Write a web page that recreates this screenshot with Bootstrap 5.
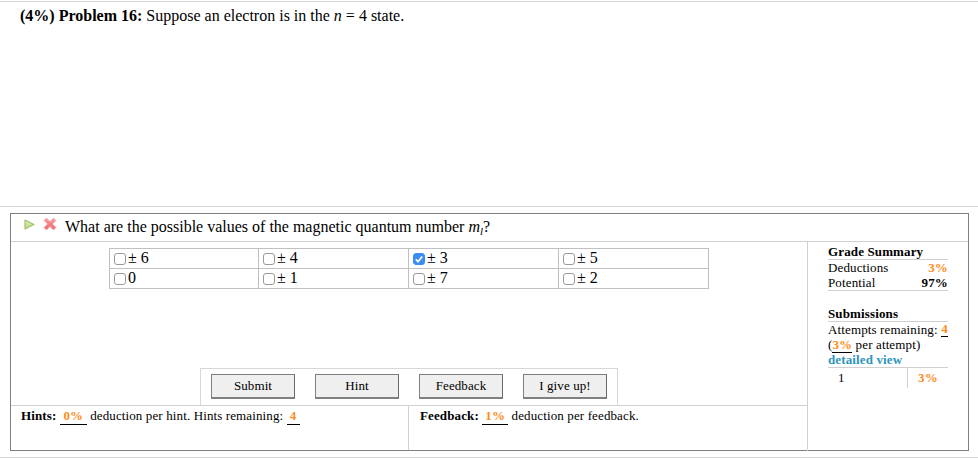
<!DOCTYPE html>
<html lang="en">
<head>
<meta charset="utf-8">
<title>Problem 16</title>
<link href="https://cdn.jsdelivr.net/npm/bootstrap@5.3.0/dist/css/bootstrap.min.css" rel="stylesheet">
<style>
html,body{height:459px;overflow:hidden;}
body{font-family:"Liberation Serif","Times New Roman",serif;color:#000;background:#fff;font-size:13px;line-height:15px;}
.rule{height:1px;background:#d8d8d8;}
.rule-top{margin-top:1px;}
.stmt{height:204px;padding:4px 0 0 20px;font-size:16px;line-height:20px;}
.pbox{margin:6px 9px 0 10px;height:238px;border:1px solid #808080;}
.qhead{height:28px;border-bottom:1px solid #d0d0d0;padding:0 0 2px 13px;font-size:16px;}
.qhead sub{font-size:11px;font-style:italic;}
.ic-play{margin:0 8px 5px 0;}
.ic-x{margin:0 8px 6px 0;}
.main-col{width:796px;}
.side-col{width:161px;border-left:1px solid #d0d0d0;padding:3px 0 0 20px;letter-spacing:.13px;}
.side-in{width:120px;}
.choices{margin:6px 0 0 98px;width:600px;border-collapse:collapse;table-layout:fixed;height:41px;}
.choices td{border:1px solid #c0c0c0;height:20px;padding:0 0 2px 2px;font-size:16px;line-height:17px;white-space:nowrap;}
.col-first{width:149px;}
.col-rest{width:150px;}
.choices input{width:12px;height:12px;margin:0 2px 0 2px;vertical-align:-2px;appearance:none;border:1px solid #9a9a9a;border-radius:3px;background:#fff;}
.choices input:checked{background:#3b8df5 url("data:image/svg+xml,%3Csvg xmlns='http://www.w3.org/2000/svg' viewBox='0 0 13 13'%3E%3Cpath d='M3 6.8l2.4 2.6L10 3.8' fill='none' stroke='%23fff' stroke-width='1.8'/%3E%3C/svg%3E") center/12px no-repeat;border-color:#3b8df5;}
.spacer-area{height:79px;}
.btn-bar{margin-left:189px;width:418px;height:37px;border:1px solid #d8d8d8;border-bottom:0;padding:5px 10px 0;gap:20px;}
.btn-ans{width:84px;height:25px;background:#efefef;border:1px solid #808080;border-right-color:#6a6a6a;border-bottom-width:2px;border-radius:0;font-size:13px;line-height:22px;padding:0;color:#000;letter-spacing:.1px;}
.foot{height:45px;border-top:1px solid #d0d0d0;}
.foot-l{width:397px;padding:2px 0 0 10px;letter-spacing:.12px;}
.foot-r{flex:1;border-left:1px solid #d0d0d0;padding:2px 0 0 11px;letter-spacing:.12px;}
.blank{display:inline-block;border-bottom:1px solid #000;color:#ff8c1a;font-weight:700;text-align:center;line-height:14px;height:16px;}
.b-hint{width:27px;}
.b-fb{width:26px;}
.b-small{width:13px;}
.hot{color:#ff8c1a;font-weight:700;}
.stitle{font-weight:700;border-bottom:1px solid #d0d0d0;height:15px;line-height:14px;}
.srow{height:15px;}
.srow-last{height:16px;border-bottom:1px solid #d0d0d0;}
.gap-sec{height:16px;}
.slink{color:#2e95bc;font-weight:700;text-decoration:none;border-bottom:1px solid #d0d0d0;display:block;height:16px;line-height:15px;}
.attempt{height:20px;width:120px;}
.attempt-n{width:80px;padding:2px 0 0 10px;border-right:1px solid #d0d0d0;}
.attempt-v{flex:1;text-align:center;padding-top:2px;}
.under{display:inline-block;border-bottom:1px solid #000;color:#ff8c1a;font-weight:700;line-height:13px;height:15px;}
</style>
</head>
<body>
<div class="rule rule-top"></div>
<div class="stmt"><b>(4%) Problem 16:</b> Suppose an electron is in the <em>n</em> = 4 state.</div>
<div class="rule"></div>
<div class="pbox">
  <div class="qhead d-flex align-items-center">
    <svg class="ic-play" width="11" height="11" viewBox="0 0 11 11" aria-hidden="true"><defs><linearGradient id="gp" x1="0" y1="0" x2="0" y2="1"><stop offset="0" stop-color="#dff0b8"/><stop offset="1" stop-color="#b5d880"/></linearGradient></defs><path d="M1 1 10 5.5 1 10Z" fill="url(#gp)" stroke="#a5c070" stroke-width="1.2" stroke-linejoin="round"/></svg>
    <svg class="ic-x" width="14" height="14" viewBox="0 0 14 14" aria-hidden="true"><defs><linearGradient id="gx" x1="0" y1="0" x2="0" y2="1"><stop offset="0" stop-color="#f9a0a4"/><stop offset="1" stop-color="#ee5f68"/></linearGradient></defs><path d="M1 3.5 3.5 1 7 4.5 10.5 1 13 3.5 9.5 7 13 10.5 10.5 13 7 9.5 3.5 13 1 10.5 4.5 7Z" fill="url(#gx)" stroke="#f2b0b3" stroke-width=".8" stroke-linejoin="round"/></svg>
    <span>What are the possible values of the magnetic quantum number <em>m<sub>l</sub></em>?</span>
  </div>
  <div class="d-flex" style="height:209px">
    <div class="main-col d-flex flex-column">
      <table class="choices">
        <colgroup><col class="col-first"><col class="col-rest"><col class="col-rest"><col class="col-rest"></colgroup>
        <tr><td><input type="checkbox">± 6</td><td><input type="checkbox">± 4</td><td><input type="checkbox" checked>± 3</td><td><input type="checkbox">± 5</td></tr>
        <tr><td><input type="checkbox">0</td><td><input type="checkbox">± 1</td><td><input type="checkbox">± 7</td><td><input type="checkbox">± 2</td></tr>
      </table>
      <div class="spacer-area"></div>
      <div class="btn-bar d-flex">
        <button class="btn-ans" type="button">Submit</button>
        <button class="btn-ans" type="button">Hint</button>
        <button class="btn-ans" type="button">Feedback</button>
        <button class="btn-ans" type="button">I give up!</button>
      </div>
      <div class="foot d-flex">
        <div class="foot-l"><b>Hints:</b> <span class="blank b-hint">0%</span> deduction per hint. Hints remaining: <span class="blank b-small">4</span></div>
        <div class="foot-r"><b>Feedback:</b> <span class="blank b-fb">1%</span> deduction per feedback.</div>
      </div>
    </div>
    <div class="side-col">
      <div class="side-in">
        <div class="stitle">Grade Summary</div>
        <div class="srow d-flex justify-content-between"><span>Deductions</span><span class="hot">3%</span></div>
        <div class="srow-last d-flex justify-content-between"><span>Potential</span><b>97%</b></div>
        <div class="gap-sec"></div>
        <div class="stitle">Submissions</div>
        <div class="srow d-flex justify-content-between"><span>Attempts remaining:</span><span class="under">4</span></div>
        <div class="srow">(<span class="under">3%</span> per attempt)</div>
        <a class="slink" href="#">detailed view</a>
        <div class="attempt d-flex"><div class="attempt-n">1</div><div class="attempt-v hot">3%</div></div>
      </div>
    </div>
  </div>
</div>
<div class="rule" style="margin-top:6px"></div>
</body>
</html>
